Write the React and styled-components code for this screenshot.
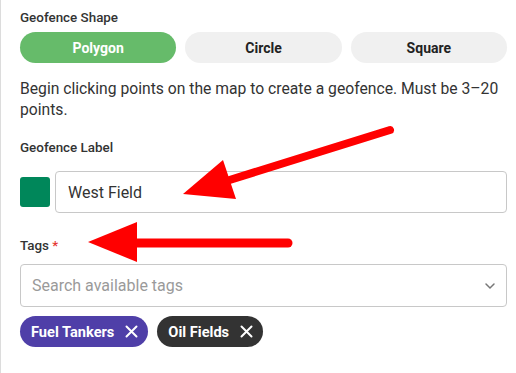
import React from "react";
import styled, { createGlobalStyle } from "styled-components";

const Global = createGlobalStyle`
  html, body { margin: 0; padding: 0; background: #fff; }
  body { font-family: Roboto, "Noto Sans", Arial, sans-serif; color: #333; }
  * { box-sizing: border-box; }
`;

const Page = styled.div`
  position: relative;
  width: 516px;
  height: 373px;
  border-left: 1px solid #dcdcdc;
  padding: 10px 9px 0 19px;
  display: flex;
  flex-direction: column;
`;

const Label = styled.div`
  font-size: 13.4px;
  font-weight: 500;
  line-height: 16px;
  color: #333;
  margin-top: ${(p) => p.$mt || 0}px;
`;

const Star = styled.span`
  color: #e53935;
`;

const ShapeRow = styled.div`
  display: grid;
  grid-template-columns: repeat(3, 1fr);
  gap: 9px;
  margin-top: 6px;
`;

const ShapeButton = styled.button`
  height: 31px;
  border: none;
  border-radius: 16px;
  font-family: inherit;
  font-size: 14px;
  font-weight: 700;
  background: ${(p) => (p.$active ? "#66bb6a" : "#f0f0f0")};
  color: ${(p) => (p.$active ? "#fff" : "#222")};
  padding: 0;
`;

const Help = styled.p`
  margin: 15px 0 0;
  font-size: 15.7px;
  line-height: 21px;
  color: #333;
`;

const InputRow = styled.div`
  display: flex;
  align-items: center;
  gap: 5px;
  margin-top: 15px;
`;

const Swatch = styled.div`
  width: 30px;
  height: 30px;
  border-radius: 3px;
  background: ${(p) => p.$color};
  flex: none;
`;

const TextBox = styled.div`
  flex: 1;
  height: 42px;
  border: 1px solid #c8c8c8;
  border-radius: 4px;
  display: flex;
  align-items: center;
  padding: 0 12px;
  font-size: 16px;
  color: #333;
`;

const Select = styled.div`
  height: 43px;
  margin-top: 10px;
  border: 1px solid #c8c8c8;
  border-radius: 4px;
  display: flex;
  align-items: center;
  justify-content: space-between;
  padding: 0 10px 0 11px;
  font-size: 16px;
  color: #9a9a9a;
`;

const ChipRow = styled.div`
  display: flex;
  gap: 9px;
  margin-top: 9px;
`;

const Chip = styled.div`
  height: 31px;
  border-radius: 16px;
  background: ${(p) => p.$bg};
  color: #fff;
  display: flex;
  align-items: center;
  gap: 11px;
  padding: 0 10px 0 11px;
  font-size: 14.6px;
  font-weight: 700;
`;

const Overlay = styled.svg`
  position: absolute;
  left: -1px;
  top: 0;
  pointer-events: none;
`;

const X = () => (
  <svg width="13" height="13" viewBox="0 0 13 13">
    <path d="M1.5 1.5 L11.5 11.5 M11.5 1.5 L1.5 11.5" stroke="#fff" strokeWidth="2" strokeLinecap="round" fill="none" />
  </svg>
);

const Chevron = () => (
  <svg width="12" height="8" viewBox="0 0 12 8">
    <path d="M2 2 L6 6 L10 2" stroke="#777" strokeWidth="1.5" fill="none" strokeLinecap="round" />
  </svg>
);

export default function App() {
  return (
    <>
      <Global />
      <Page>
        <Label>Geofence Shape</Label>
        <ShapeRow>
          <ShapeButton $active>Polygon</ShapeButton>
          <ShapeButton>Circle</ShapeButton>
          <ShapeButton>Square</ShapeButton>
        </ShapeRow>
        <Help>
          Begin clicking points on the map to create a geofence. Must be 3–20 points.
        </Help>
        <Label $mt={20}>Geofence Label</Label>
        <InputRow>
          <Swatch $color="#00875a" />
          <TextBox>West Field</TextBox>
        </InputRow>
        <Label $mt={25}>
          Tags <Star>*</Star>
        </Label>
        <Select>
          <span>Search available tags</span>
          <Chevron />
        </Select>
        <ChipRow>
          <Chip $bg="#4f3fa8">
            Fuel Tankers <X />
          </Chip>
          <Chip $bg="#333333">
            Oil Fields <X />
          </Chip>
        </ChipRow>
        <Overlay width="516" height="373" viewBox="0 0 516 373">
          <line x1="390" y1="130" x2="220" y2="183" stroke="#ff0000" strokeWidth="8" strokeLinecap="round" />
          <polygon points="183,194 223,160 236,199" fill="#ff0000" />
          <line x1="288" y1="243" x2="130" y2="243" stroke="#ff0000" strokeWidth="9" strokeLinecap="round" />
          <polygon points="88,242 137,222 137,262" fill="#ff0000" />
        </Overlay>
      </Page>
    </>
  );
}
